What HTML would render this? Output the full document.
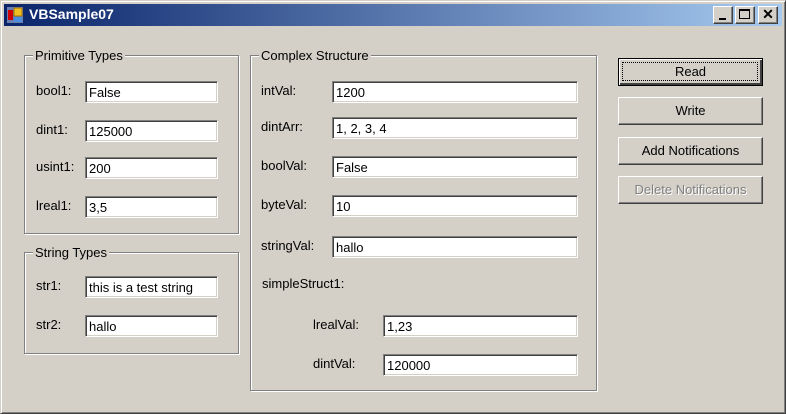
<!DOCTYPE html>
<html><head><meta charset="utf-8"><style>
*{margin:0;padding:0;box-sizing:border-box}
body{width:786px;height:414px;overflow:hidden;background:#d4d0c8;font-family:"Liberation Sans",sans-serif;font-size:12px;color:#000;position:relative}
.win{position:absolute;left:0;top:0;width:786px;height:414px;border:1px solid;border-color:#d4d0c8 #404040 #404040 #d4d0c8;box-shadow:inset 1px 1px 0 #fff,inset -1px -1px 0 #808080}
.title{position:absolute;left:4px;top:4px;width:778px;height:22px;background:linear-gradient(to right,#0a246a,#a6caf0)}
.title span{position:absolute;left:25px;top:2px;color:#fff;font-weight:bold;font-size:14px}
.tb{position:absolute;top:6px;width:20px;height:18px;background:#d4d0c8;border:1px solid;border-color:#fff #404040 #404040 #fff;box-shadow:inset -1px -1px 0 #808080}
.grp{position:absolute;border:1px solid #808080;box-shadow:1px 1px 0 #fff,inset 1px 1px 0 #fff}
.grp .lg{position:absolute;top:-8px;left:8px;background:#d4d0c8;padding:0 2px;font-size:13px}
.l{position:absolute;font-size:13px}
.t{position:absolute;height:22px;background:#fff;border:1px solid;border-color:#808080 #fff #fff #808080;box-shadow:inset 1px 1px 0 #404040,inset -1px -1px 0 #d4d0c8;font-size:13px;padding:3px 0 0 3px}
.b{position:absolute;left:618px;width:145px;height:28px;border:1px solid;border-color:#fff #404040 #404040 #fff;box-shadow:inset -1px -1px 0 #808080;text-align:center;font-size:13px;line-height:25px}
</style></head><body>
<div class="win"></div>
<div class="title">
<svg style="position:absolute;left:3px;top:3px" width="17" height="16"><rect x="0" y="0" width="16" height="16" fill="#6a7fb0"/><rect x="1" y="3" width="5" height="10" fill="#c00"/><rect x="7" y="1" width="8" height="8" fill="#f0c020" stroke="#a07000"/><rect x="7" y="10" width="8" height="5" fill="#4a8ee0"/></svg>
<span>VBSample07</span></div>
<div class="tb" style="left:713px"><div style="position:absolute;left:5px;top:11px;width:7px;height:2px;background:#000"></div></div>
<div class="tb" style="left:735px"><div style="position:absolute;left:3px;top:2px;width:11px;height:10px;border:1px solid #000;border-top-width:2px"></div></div>
<div class="tb" style="left:758px;font-weight:bold;font-size:14px;text-align:center;line-height:15px">✕</div>

<div class="grp" style="left:24px;top:55px;width:215px;height:179px"><span class="lg">Primitive Types</span></div>
<div class="l" style="left:36px;top:83px">bool1:</div><div class="t" style="left:85px;top:81px;width:133px">False</div>
<div class="l" style="left:36px;top:122px">dint1:</div><div class="t" style="left:85px;top:120px;width:133px">125000</div>
<div class="l" style="left:36px;top:159px">usint1:</div><div class="t" style="left:85px;top:157px;width:133px">200</div>
<div class="l" style="left:36px;top:198px">lreal1:</div><div class="t" style="left:85px;top:196px;width:133px">3,5</div>

<div class="grp" style="left:24px;top:252px;width:215px;height:102px"><span class="lg">String Types</span></div>
<div class="l" style="left:36px;top:278px">str1:</div><div class="t" style="left:85px;top:276px;width:133px">this is a test string</div>
<div class="l" style="left:36px;top:317px">str2:</div><div class="t" style="left:85px;top:315px;width:133px">hallo</div>

<div class="grp" style="left:250px;top:55px;width:347px;height:336px"><span class="lg">Complex Structure</span></div>
<div class="l" style="left:261px;top:83px">intVal:</div><div class="t" style="left:332px;top:81px;width:246px">1200</div>
<div class="l" style="left:261px;top:119px">dintArr:</div><div class="t" style="left:332px;top:117px;width:246px">1, 2, 3, 4</div>
<div class="l" style="left:261px;top:158px">boolVal:</div><div class="t" style="left:332px;top:156px;width:246px">False</div>
<div class="l" style="left:261px;top:197px">byteVal:</div><div class="t" style="left:332px;top:195px;width:246px">10</div>
<div class="l" style="left:261px;top:238px">stringVal:</div><div class="t" style="left:332px;top:236px;width:246px">hallo</div>
<div class="l" style="left:262px;top:276px">simpleStruct1:</div>
<div class="l" style="left:313px;top:317px">lrealVal:</div><div class="t" style="left:383px;top:315px;width:195px">1,23</div>
<div class="l" style="left:313px;top:356px">dintVal:</div><div class="t" style="left:383px;top:354px;width:195px">120000</div>

<div class="b" style="top:58px;border:1px solid #000;box-shadow:inset 1px 1px 0 #fff,inset -2px -2px 0 #404040"><div style="position:absolute;left:3px;top:3px;right:4px;bottom:4px;border:1px dotted #000"></div>Read</div>
<div class="b" style="top:97px">Write</div>
<div class="b" style="top:137px">Add Notifications</div>
<div class="b" style="top:176px;color:#808080;text-shadow:1px 1px 0 #fff">Delete Notifications</div>
</body></html>
